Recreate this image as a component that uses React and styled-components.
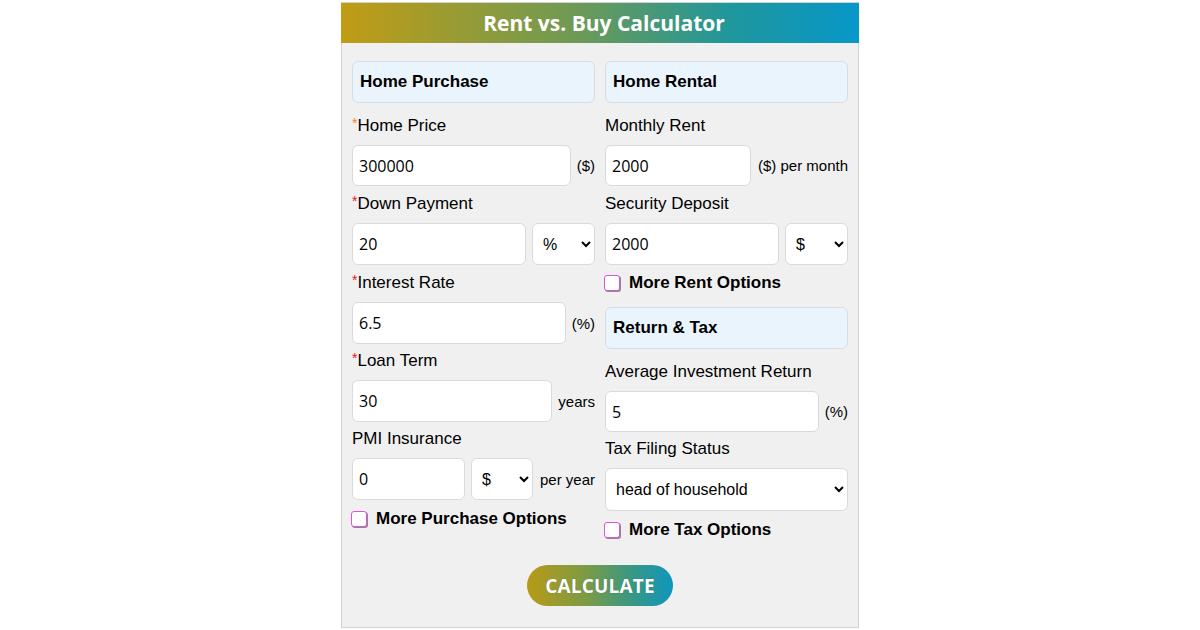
import React from "react";
import styled, { createGlobalStyle } from "styled-components";

const Global = createGlobalStyle`
  html, body { margin: 0; padding: 0; background: #ffffff; }
  body { font-family: "Liberation Sans", Arial, sans-serif; color: #000; }
  * { box-sizing: border-box; }
`;

const Card = styled.div`
  width: 518px;
  margin: 2px auto 0;
  background: #f0f0f0;
  border: 1px solid #d2d2d2;
`;

const Header = styled.div`
  height: 40px;
  margin: 0 -1px;
  padding-left: 8px;
  display: flex;
  align-items: center;
  justify-content: center;
  background: linear-gradient(to right, #c19c14 0%, #6f9a54 45%, #1f979c 75%, #0797c9 100%);
  color: #fff;
  font-family: "Open Sans", sans-serif;
  font-weight: 700;
  font-size: 21px;
`;

const Body = styled.div`
  padding: 18px 10px 21px;
`;

const Columns = styled.div`
  display: grid;
  grid-template-columns: minmax(0, 1fr) minmax(0, 1fr);
  column-gap: 10px;
  align-items: start;
`;

const Column = styled.div`
  display: flex;
  flex-direction: column;
  min-width: 0;
`;

const SectionHead = styled.div`
  height: 42px;
  display: flex;
  align-items: center;
  padding-left: 7px;
  background: #eaf4fd;
  border: 1px solid #d6dde3;
  border-radius: 6px;
  font-weight: 700;
  font-size: 17px;
  margin-bottom: 12px;
`;

const Label = styled.div`
  font-size: 17px;
  line-height: 22px;
  height: 22px;
  margin-bottom: 8px;
  white-space: nowrap;
`;

const Star = styled.span`
  color: ${(p) => (p.$orange ? "#f08a24" : "#e8141a")};
  font-size: 14px;
  vertical-align: top;
  line-height: 17px;
`;

const Field = styled.div`
  margin-bottom: ${(p) => (p.$mb !== undefined ? p.$mb : 7)}px;
`;

const Row = styled.div`
  display: flex;
  align-items: center;
  gap: 6px;
`;

const TextInput = styled.input`
  flex: 1;
  min-width: 0;
  width: 0;
  height: ${(p) => p.$h || 41}px;
  padding: 0 6px;
  background: #fff;
  border: 1px solid #dadada;
  border-radius: 6px;
  font-family: "Open Sans", sans-serif;
  font-size: 16px;
  color: #000;
  outline: none;
`;

const Select = styled.select`
  width: ${(p) => (p.$w ? `${p.$w}px` : "100%")};
  min-width: 0;
  flex: ${(p) => (p.$w ? "none" : "1")};
  height: ${(p) => p.$h || 41}px;
  padding: 0 6px;
  background: #fff;
  border: 1px solid #dadada;
  border-radius: 6px;
  font-family: "Liberation Sans", Arial, sans-serif;
  font-size: 16px;
  color: #000;
  outline: none;
`;

const Unit = styled.span`
  font-size: 15px;
  white-space: nowrap;
  margin-left: ${(p) => p.$ml || 0}px;
`;

const CheckRow = styled.label`
  display: flex;
  align-items: center;
  gap: 9px;
  height: 22px;
  margin-top: ${(p) => p.$mt || 0}px;
  margin-bottom: ${(p) => p.$mb || 0}px;
  margin-left: -1px;
  font-weight: 700;
  font-size: 17px;
  white-space: nowrap;
`;

const Check = styled.input`
  appearance: none;
  flex: none;
  width: 16px;
  height: 16px;
  margin: 0;
  background: #fff;
  border: 1px solid #de52de;
  border-radius: 3px;
  box-shadow: 1px 1px 0 #8a8a8a;
`;

const ButtonRow = styled.div`
  display: flex;
  justify-content: center;
  margin-top: 24px;
`;

const CalcButton = styled.button`
  width: 146px;
  height: 41px;
  border: none;
  border-radius: 21px;
  background: linear-gradient(to right, #b89a17 0%, #7d9b45 40%, #3b9880 70%, #0f96bd 100%);
  color: #fff;
  font-family: "Open Sans", sans-serif;
  font-weight: 700;
  font-size: 19px;
  letter-spacing: 0.2px;
  text-shadow: 0 0 1px rgba(0, 0, 0, 0.35);
  cursor: pointer;
`;

export default function App() {
  return (
    <>
      <Global />
      <Card>
        <Header>Rent vs. Buy Calculator</Header>
        <Body>
          <Columns>
            <Column>
              <SectionHead>Home Purchase</SectionHead>
              <Field>
                <Label><Star $orange>*</Star>Home Price</Label>
                <Row>
                  <TextInput defaultValue="300000" />
                  <Unit>($)</Unit>
                </Row>
              </Field>
              <Field>
                <Label><Star>*</Star>Down Payment</Label>
                <Row>
                  <TextInput defaultValue="20" $h={42} />
                  <Select $w={63} $h={42} defaultValue="%">
                    <option>%</option>
                    <option>$</option>
                  </Select>
                </Row>
              </Field>
              <Field $mb={6}>
                <Label><Star>*</Star>Interest Rate</Label>
                <Row>
                  <TextInput defaultValue="6.5" $h={42} />
                  <Unit>(%)</Unit>
                </Row>
              </Field>
              <Field $mb={6}>
                <Label><Star>*</Star>Loan Term</Label>
                <Row>
                  <TextInput defaultValue="30" $h={42} />
                  <Unit>years</Unit>
                </Row>
              </Field>
              <Field $mb={0}>
                <Label>PMI Insurance</Label>
                <Row>
                  <TextInput defaultValue="0" $h={42} />
                  <Select $w={62} $h={42} defaultValue="$">
                    <option>$</option>
                    <option>%</option>
                  </Select>
                  <Unit $ml={1}>per year</Unit>
                </Row>
              </Field>
              <CheckRow $mt={8}>
                <Check type="checkbox" />
                More Purchase Options
              </CheckRow>
            </Column>

            <Column>
              <SectionHead>Home Rental</SectionHead>
              <Field>
                <Label>Monthly Rent</Label>
                <Row>
                  <TextInput defaultValue="2000" />
                  <Unit $ml={1}>($) per month</Unit>
                </Row>
              </Field>
              <Field>
                <Label>Security Deposit</Label>
                <Row>
                  <TextInput defaultValue="2000" $h={42} />
                  <Select $w={63} $h={42} defaultValue="$">
                    <option>$</option>
                    <option>%</option>
                  </Select>
                </Row>
              </Field>
              <CheckRow $mt={0} $mb={13}>
                <Check type="checkbox" />
                More Rent Options
              </CheckRow>
              <SectionHead>Return &amp; Tax</SectionHead>
              <Field $mb={6}>
                <Label>Average Investment Return</Label>
                <Row>
                  <TextInput defaultValue="5" />
                  <Unit>(%)</Unit>
                </Row>
              </Field>
              <Field $mb={0}>
                <Label>Tax Filing Status</Label>
                <Row>
                  <Select $h={43} defaultValue="head of household">
                    <option>single</option>
                    <option>married filing jointly</option>
                    <option>married filing separately</option>
                    <option>head of household</option>
                  </Select>
                </Row>
              </Field>
              <CheckRow $mt={8}>
                <Check type="checkbox" />
                More Tax Options
              </CheckRow>
            </Column>
          </Columns>
          <ButtonRow>
            <CalcButton type="button">CALCULATE</CalcButton>
          </ButtonRow>
        </Body>
      </Card>
    </>
  );
}
